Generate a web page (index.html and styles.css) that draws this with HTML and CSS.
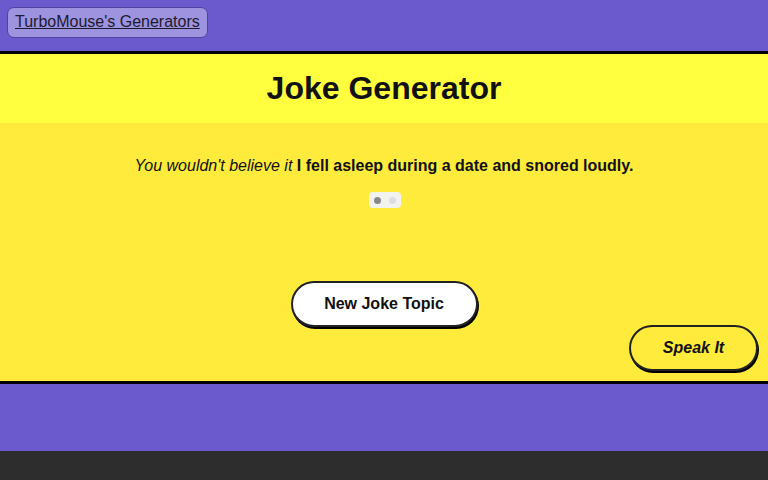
FILE: index.html
```html
<!DOCTYPE html>
<html lang="en">
<head>
  <meta charset="UTF-8">
  <meta name="viewport" content="width=device-width, initial-scale=1.0">
  <title>Joke Generator</title>
  <link rel="stylesheet" href="styles.css">
</head>
<body>
  <nav class="topbar">
    <a class="home-link" href="#">TurboMouse's Generators</a>
  </nav>

  <header class="title-bar">
    <h1>Joke Generator</h1>
  </header>

  <main class="joke-area">
    <p class="joke"><em>You wouldn't believe it</em> <strong>I fell asleep during a date and snored loudly.</strong></p>

    <div class="loader">
      <span class="dot"></span>
      <span class="dot dim"></span>
    </div>

    <button class="new-topic">New Joke Topic</button>
    <button class="speak">Speak It</button>
  </main>

  <footer class="bottom-band"></footer>
</body>
</html>
```

FILE: styles.css
```css
body {
  margin: 0;
  font-family: 'Liberation Sans', Arial, sans-serif;
  background-color: #2d2d2d;
  color: #111;
}

.topbar {
  background-color: #6a5acd;
  padding: 7px;
  box-sizing: border-box;
  border-bottom: 3px solid #000;
  height: 54px;
}

.home-link {
  display: inline-block;
  background-color: #9d93de;
  border: 1px solid #4f43a0;
  border-radius: 7px;
  padding: 5px 7px 6px;
  font-size: 16px;
  color: #1c1a30;
}

.title-bar {
  background-color: #ffff40;
  height: 69px;
  display: flex;
  align-items: center;
  justify-content: center;
}

.title-bar h1 {
  margin: 0;
  font-size: 32px;
  font-weight: bold;
}

.joke-area {
  background-color: #ffeb3b;
  height: 261px;
  box-sizing: border-box;
  border-bottom: 3px solid #000;
  padding-top: 34px;
  display: flex;
  flex-direction: column;
  align-items: center;
}

.joke {
  margin: 0;
  font-size: 16px;
  line-height: 18px;
}

/* two-dot "thinking" indicator */
.loader {
  margin-top: 17px;
  margin-left: 2px;
  width: 32px;
  height: 16px;
  padding: 0 5px;
  box-sizing: border-box;
  background-color: #f2f2ee;
  border-radius: 4px;
  display: flex;
  align-items: center;
  justify-content: space-between;
}

.dot {
  width: 7px;
  height: 7px;
  border-radius: 50%;
  background-color: #888;
}

.dot.dim {
  background-color: #ddd;
}

button {
  font-family: inherit;
  font-size: 16px;
  font-weight: bold;
  height: 46px;
  border: 2px solid #222;
  border-radius: 23px;
  box-shadow: 1px 2px 0 #000;
  cursor: pointer;
  color: #111;
}

.new-topic {
  margin-top: 73px;
  width: 187px;
  background-color: #fff;
}

.speak {
  align-self: flex-end;
  margin-top: -2px;
  margin-right: 10px;
  width: 129px;
  background-color: #ffeb3b;
  font-style: italic;
}

.bottom-band {
  background-color: #6a5acd;
  height: 67px;
}
```
